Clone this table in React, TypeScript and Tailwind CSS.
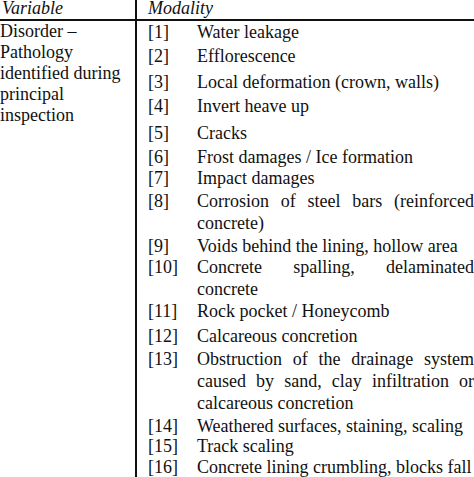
import React from "react";

type Item = { n: number; text: string; mt: string };

const ITEMS: Item[] = [
  { n: 1, text: "Water leakage", mt: "mt-0" },
  { n: 2, text: "Efflorescence", mt: "mt-[2px]" },
  { n: 3, text: "Local deformation (crown, walls)", mt: "mt-[4px]" },
  { n: 4, text: "Invert heave up", mt: "mt-[2px]" },
  { n: 5, text: "Cracks", mt: "mt-[5px]" },
  { n: 6, text: "Frost damages / Ice formation", mt: "mt-[2px]" },
  { n: 7, text: "Impact damages", mt: "-mt-[1px]" },
  { n: 8, text: "Corrosion of steel bars (reinforced concrete)", mt: "mt-[1px]" },
  { n: 9, text: "Voids behind the lining, hollow area", mt: "mt-[1px]" },
  { n: 10, text: "Concrete spalling, delaminated concrete", mt: "-mt-[1px]" },
  { n: 11, text: "Rock pocket / Honeycomb", mt: "mt-0" },
  { n: 12, text: "Calcareous concretion", mt: "mt-[3px]" },
  {
    n: 13,
    text: "Obstruction of the drainage system caused by sand, clay infiltration or calcareous concretion",
    mt: "mt-[1px]",
  },
  { n: 14, text: "Weathered surfaces, staining, scaling", mt: "mt-[1px]" },
  { n: 15, text: "Track scaling", mt: "-mt-[2px]" },
  { n: 16, text: "Concrete lining crumbling, blocks fall", mt: "-mt-[1px]" },
];

const App: React.FC = () => {
  return (
    <div
      className="w-[474px] h-[477px] overflow-hidden bg-white text-[#111] text-[18px] leading-[22px]"
      style={{ fontFamily: '"Liberation Serif", "Times New Roman", serif' }}
    >
      {/* header row */}
      <div className="flex h-[21px] border-b-2 border-[#111]">
        <div className="w-[137px] shrink-0 border-r-2 border-[#111] pl-[2px]">
          <div className="leading-[16px] italic">Variable</div>
        </div>
        <div className="flex-1 pl-[11px]">
          <div className="leading-[16px] italic">Modality</div>
        </div>
      </div>

      {/* body row */}
      <div className="flex">
        <div className="w-[137px] shrink-0 border-r-2 border-[#111] h-[500px] pr-[2px] leading-[21px]">
          Disorder – Pathology identified during principal inspection
        </div>
        <div className="flex-1 pl-[11px]">
          {ITEMS.map((it) => (
            <div key={it.n} className={`flex ${it.mt}`}>
              <div className="w-[49px] shrink-0">[{it.n}]</div>
              <div className="w-[277px] shrink-0 text-justify">{it.text}</div>
            </div>
          ))}
        </div>
      </div>
    </div>
  );
};

export default App;
